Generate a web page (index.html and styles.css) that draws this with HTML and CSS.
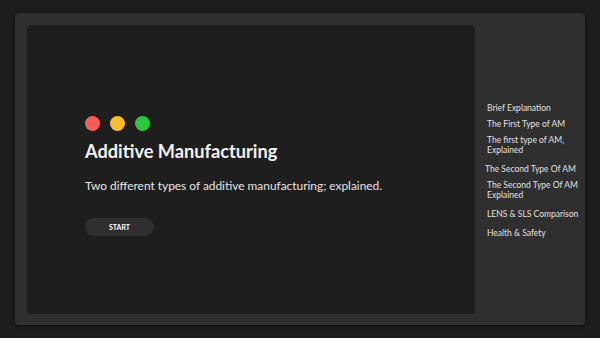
FILE: index.html
```html
<!DOCTYPE html>
<html lang="en">
<head>
    <meta charset="UTF-8">
    <meta name="viewport" content="width=device-width, initial-scale=1.0">
    <title>Additive Manufacturing</title>
    <link rel="stylesheet" href="styles.css">
</head>
<body>
    <div class="frame">
        <div class="slide">
            <div class="dots">
                <span class="dot red"></span>
                <span class="dot yellow"></span>
                <span class="dot green"></span>
            </div>
            <h1>Additive Manufacturing</h1>
            <p class="lead">Two different types of additive manufacturing; explained.</p>
            <button class="start">START</button>
        </div>

        <ul class="menu">
            <li>Brief Explanation</li>
            <li>The First Type of AM</li>
            <li>The first type of AM,<br>Explained</li>
            <li class="shift wide">The Second Type Of AM</li>
            <li>The Second Type Of AM<br>Explained</li>
            <li class="wide">LENS &amp; SLS Comparison</li>
            <li class="wide">Health &amp; Safety</li>
        </ul>
    </div>
</body>
</html>
```

FILE: styles.css
```css
body {
    margin: 0;
    background-color: #1d1d1d;
    font-family: Lato, "Open Sans", sans-serif;
    color: #f2f2f2;
}
.frame {
    display: flex;
    margin: 13px 15px;
    height: 312px;
    box-sizing: border-box;
    padding: 12px 0 11px 12px;
    background-color: #2f2f2f;
    border-radius: 4px;
    box-shadow: 0 1px 4px rgba(0, 0, 0, 0.5);
}
.slide {
    width: 448px;
    box-sizing: border-box;
    padding: 91px 0 0 58px;
    background-color: #1e1e1e;
    border-radius: 4px;
}
.dots {
    display: flex;
    gap: 10px;
}
.dot {
    width: 15px;
    height: 15px;
    border-radius: 50%;
}
.red { background-color: #f95a58; }
.yellow { background-color: #f9be2f; }
.green { background-color: #2cc840; }
h1 {
    margin: 6px 0 0;
    font-size: 18.2px;
    font-weight: 700;
    line-height: 28px;
}
.lead {
    margin: 12px 0 0;
    font-size: 11.9px;
    line-height: 18px;
    color: #e6e6e6;
}
.start {
    margin-top: 23px;
    width: 69px;
    height: 18px;
    padding: 0;
    border: none;
    border-radius: 9px;
    background-color: #2f2f2f;
    color: #ffffff;
    font-family: Lato, sans-serif;
    font-size: 7px;
    font-weight: 700;
}
.menu {
    list-style: none;
    margin: 0;
    padding: 78px 0 0 12px;
    display: flex;
    flex-direction: column;
    gap: 6px;
    font-size: 8.5px;
    line-height: 10px;
    color: #e0e0e0;
}
.menu .wide {
    margin-top: 3px;
}
.menu .shift {
    margin-left: -2px;
}
```
